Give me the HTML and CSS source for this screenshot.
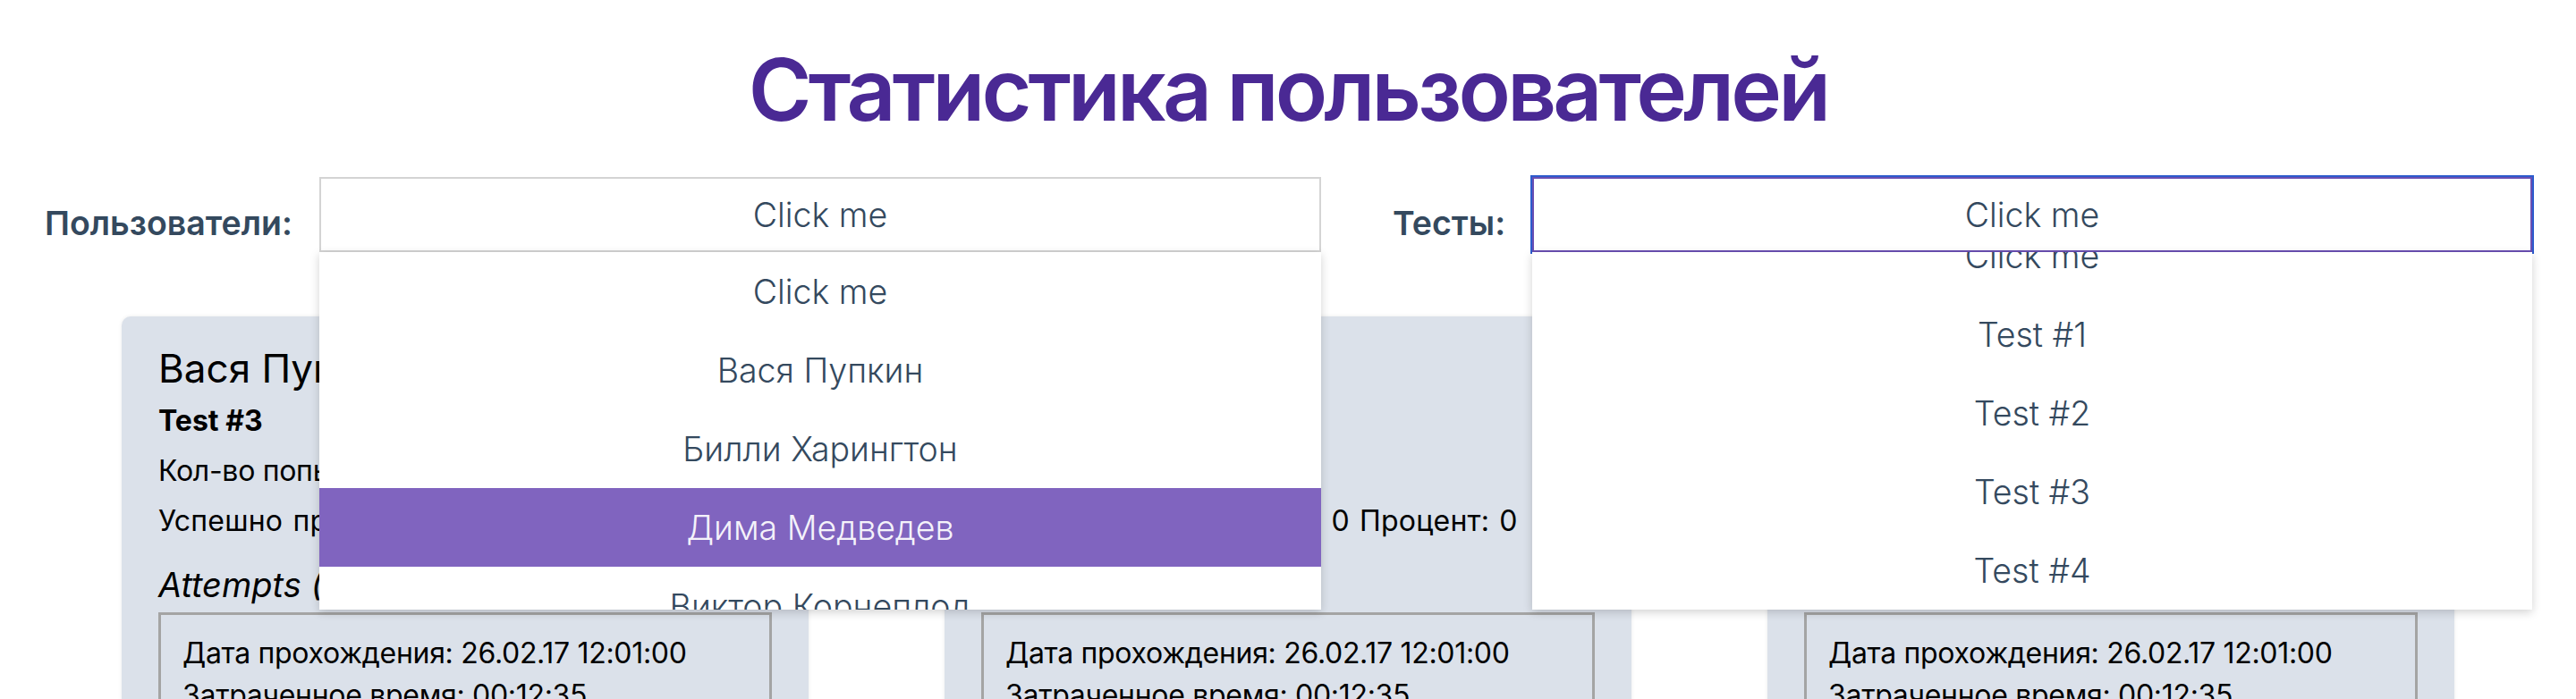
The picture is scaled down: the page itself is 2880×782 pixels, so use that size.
FILE: index.html
```html
<!DOCTYPE html>
<html lang="ru">
<head>
<meta charset="utf-8">
<title>Статистика пользователей</title>
<link rel="stylesheet" href="styles.css">
</head>
<body>
  <h1 class="page-title">Статистика пользователей</h1>

  <div class="filters">
    <div class="filter filter-users">
      <label class="filter-label">Пользователи:</label>
      <div class="select">
        <div class="select-box">Click me</div>
        <ul class="select-menu">
          <li class="select-option">Click me</li>
          <li class="select-option">Вася Пупкин</li>
          <li class="select-option">Билли Харингтон</li>
          <li class="select-option is-hovered">Дима Медведев</li>
          <li class="select-option">Виктор Корнеплод</li>
        </ul>
      </div>
    </div>

    <div class="filter filter-tests">
      <label class="filter-label">Тесты:</label>
      <div class="select">
        <div class="select-box is-focused">Click me</div>
        <ul class="select-menu is-scrolled">
          <li class="select-option">Click me</li>
          <li class="select-option">Test #1</li>
          <li class="select-option">Test #2</li>
          <li class="select-option">Test #3</li>
          <li class="select-option">Test #4</li>
        </ul>
      </div>
    </div>
  </div>

  <div class="cards">
    <div class="card">
      <div class="card-name">Вася Пупкин</div>
      <div class="card-test">Test #3</div>
      <div class="card-line">Кол-во попыток: 2</div>
      <div class="card-line card-result">Успешно пройдено раз: 1 Процент: 50</div>
      <div class="card-attempts">Attempts (2):</div>
      <div class="attempt">
        <div class="attempt-line">Дата прохождения: 26.02.17 12:01:00</div>
        <div class="attempt-line">Затраченное время: 00:12:35</div>
        <div class="attempt-line">Результат: пройден</div>
      </div>
    </div>

    <div class="card">
      <div class="card-name">Билли Харингтон</div>
      <div class="card-test">Test #3</div>
      <div class="card-line">Кол-во попыток: 1</div>
      <div class="card-line card-result">Успешно пройдено раз: 0 Процент: 0</div>
      <div class="card-attempts">Attempts (1):</div>
      <div class="attempt">
        <div class="attempt-line">Дата прохождения: 26.02.17 12:01:00</div>
        <div class="attempt-line">Затраченное время: 00:12:35</div>
        <div class="attempt-line">Результат: не пройден</div>
      </div>
    </div>

    <div class="card">
      <div class="card-name">Дима Медведев</div>
      <div class="card-test">Test #3</div>
      <div class="card-line">Кол-во попыток: 1</div>
      <div class="card-line card-result">Успешно пройдено раз: 1 Процент: 100</div>
      <div class="card-attempts">Attempts (1):</div>
      <div class="attempt">
        <div class="attempt-line">Дата прохождения: 26.02.17 12:01:00</div>
        <div class="attempt-line">Затраченное время: 00:12:35</div>
        <div class="attempt-line">Результат: пройден</div>
      </div>
    </div>
  </div>
</body>
</html>
```

FILE: styles.css
```css
* {
  box-sizing: border-box;
}

html,
body {
  margin: 0;
  padding: 0;
  background: #ffffff;
}

body {
  font-family: "Inter", "Noto Sans", sans-serif;
  color: #000000;
  overflow: hidden;
}

/* heading */
.page-title {
  margin: 42px 0 0;
  font-size: 96px;
  line-height: 116px;
  font-weight: 600;
  letter-spacing: -0.04em;
  text-align: center;
  color: #4a2994;
}

/* filter row with the two dropdowns */
.filters {
  display: flex;
  align-items: center;
  margin-top: 40px;
  padding-left: 50px;
  gap: 80px;
  position: relative;
  z-index: 5;
}

.filter {
  display: flex;
  align-items: center;
  gap: 34px;
}

.filter-tests {
  gap: 35px;
}

.filter-label {
  flex: none;
  padding-top: 18px;
  font-size: 37.5px;
  font-weight: 600;
  color: #34495e;
  white-space: nowrap;
}

.filter-users .filter-label {
  width: 273px;
}

.filter-tests .filter-label {
  width: 121px;
}

.select {
  position: relative;
  width: 1120px;
}

.filter-tests .select {
  width: 1118px;
}

.select-box {
  height: 84px;
  border: 2px solid #d4d4d4;
  background: #ffffff;
  display: flex;
  align-items: center;
  justify-content: center;
  font-size: 37.5px;
  font-weight: 300;
  color: #34495e;
}

.select-box.is-focused {
  border-color: #6a4fb3;
  outline: 2px solid #2c5bcd;
}

.select-menu {
  position: absolute;
  top: 100%;
  left: 0;
  right: 0;
  height: 400px;
  margin: 0;
  padding: 0;
  list-style: none;
  overflow: hidden;
  background: #ffffff;
  box-shadow: 0 3px 10px rgba(0, 0, 0, 0.18);
  z-index: 2;
}

/* the tests list is scrolled to its end */
.select-menu.is-scrolled .select-option:first-child {
  margin-top: -40px;
}

.select-option {
  height: 88px;
  display: flex;
  align-items: center;
  justify-content: center;
  font-size: 37.5px;
  font-weight: 300;
  color: #34495e;
}

.select-option.is-hovered {
  background: #8064bf;
  color: #f4f2fa;
}

/* user cards */
.cards {
  display: flex;
  justify-content: center;
  gap: 152px;
  margin-top: 72px;
}

.card {
  width: 768px;
  padding: 27px 41px 40px;
  background: #dbe1ea;
  border-radius: 10px;
  box-shadow: 0 0 4px rgba(0, 0, 0, 0.08);
}

.card-name {
  font-size: 44px;
  line-height: 62px;
  font-weight: 400;
}

.card-test {
  font-size: 32px;
  line-height: 56px;
  font-weight: 700;
}

.card-line {
  font-size: 32px;
  line-height: 56px;
  letter-spacing: -0.3px;
}

.card-result {
  letter-spacing: 0.2px;
  word-spacing: 2px;
}

.card-attempts {
  margin-top: 15px;
  font-size: 38px;
  line-height: 56px;
  font-style: italic;
}

.attempt {
  margin-top: 3px;
  border: 3px solid #a4a4a4;
  padding: 19px 24px 20px;
}

.attempt-line {
  font-size: 32px;
  line-height: 47px;
  letter-spacing: -0.3px;
}
```
